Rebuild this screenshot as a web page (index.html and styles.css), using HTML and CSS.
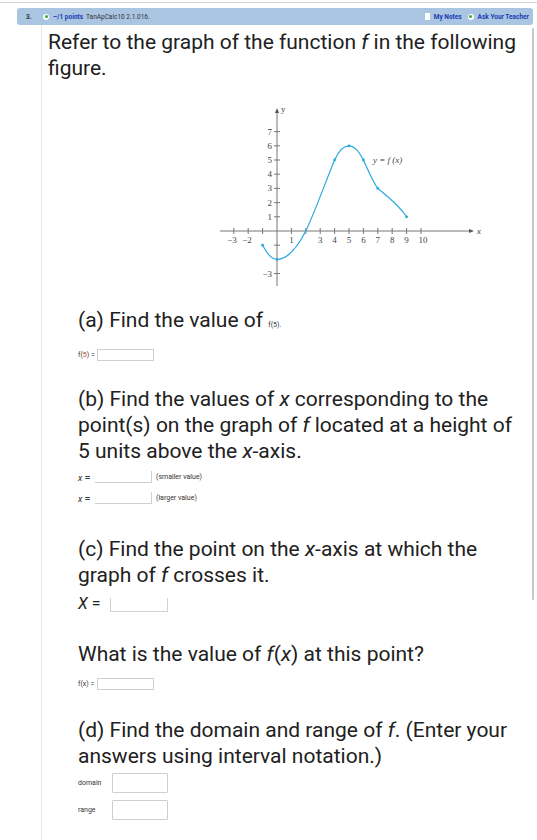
FILE: index.html
```html
<!DOCTYPE html>
<html>
<head>
<meta charset="utf-8">
<link rel="stylesheet" href="styles.css">
</head>
<body>
<div class="page">
  <div class="topline"></div>
  <div class="header">
    <div class="hleft">
      <span class="qnum">3.</span>
      <span class="dot"><span></span></span>
      <span class="pts">–/1 points</span>
      <span class="code">TanApCalc10 2.1.016.</span>
    </div>
    <div class="hright">
      <span class="note"></span>
      <span class="link">My Notes</span>
      <span class="dot"><span></span></span>
      <span class="link">Ask Your Teacher</span>
    </div>
  </div>
  <div class="content">
    <p class="big q">Refer to the graph of the function <i>f</i> in the following figure.</p>
    <svg class="graph" width="270" height="190" viewBox="0 0 270 190">
      <g stroke="#777" stroke-width="1" fill="none">
        <line x1="5" y1="131" x2="254" y2="131"/>
        <line x1="62" y1="186" x2="62" y2="12"/>
        <g>
          <line x1="18.8" y1="128" x2="18.8" y2="134"/>
          <line x1="33.2" y1="128" x2="33.2" y2="134"/>
          <line x1="47.6" y1="128" x2="47.6" y2="134"/>
          <line x1="76.4" y1="128" x2="76.4" y2="134"/>
          <line x1="90.8" y1="128" x2="90.8" y2="134"/>
          <line x1="105.2" y1="128" x2="105.2" y2="134"/>
          <line x1="119.6" y1="128" x2="119.6" y2="134"/>
          <line x1="134" y1="128" x2="134" y2="134"/>
          <line x1="148.4" y1="128" x2="148.4" y2="134"/>
          <line x1="162.8" y1="128" x2="162.8" y2="134"/>
          <line x1="177.2" y1="128" x2="177.2" y2="134"/>
          <line x1="191.6" y1="128" x2="191.6" y2="134"/>
          <line x1="206" y1="128" x2="206" y2="134"/>
        </g>
        <g>
          <line x1="59" y1="116.8" x2="65" y2="116.8"/>
          <line x1="59" y1="102.6" x2="65" y2="102.6"/>
          <line x1="59" y1="88.4" x2="65" y2="88.4"/>
          <line x1="59" y1="74.2" x2="65" y2="74.2"/>
          <line x1="59" y1="60" x2="65" y2="60"/>
          <line x1="59" y1="45.8" x2="65" y2="45.8"/>
          <line x1="59" y1="31.6" x2="65" y2="31.6"/>
          <line x1="59" y1="145.2" x2="65" y2="145.2"/>
          <line x1="59" y1="173.6" x2="65" y2="173.6"/>
        </g>
      </g>
      <polygon points="254,129 259,131 254,133" fill="#555"/>
      <polygon points="60,13 62,8 64,13" fill="#555"/>
      <g class="lbl" font-size="9" fill="#444" font-family="Liberation Serif, serif">
        <text x="262" y="134" font-style="italic">x</text>
        <text x="66" y="12" >y</text>
        <g text-anchor="middle">
          <text x="17" y="143">−3</text>
          <text x="32" y="143">−2</text>
          <text x="76.4" y="143">1</text>
          <text x="105.2" y="143">3</text>
          <text x="119.6" y="143">4</text>
          <text x="134" y="143">5</text>
          <text x="148.4" y="143">6</text>
          <text x="162.8" y="143">7</text>
          <text x="177.2" y="143">8</text>
          <text x="191.6" y="143">9</text>
          <text x="208" y="143">10</text>
        </g>
        <g text-anchor="end">
          <text x="57" y="35">7</text>
          <text x="57" y="49">6</text>
          <text x="57" y="63">5</text>
          <text x="57" y="77">4</text>
          <text x="57" y="91">3</text>
          <text x="57" y="106">2</text>
          <text x="57" y="120">1</text>
          <text x="57" y="177">−3</text>
        </g>
        <text x="158" y="63" font-style="italic">y = f (x)</text>
      </g>
      <path d="M47.6,145.2 C52,153 56,159.4 62,159.4 C72,159.4 82,148 90.8,131 C100,112 112,78 119.6,60 C124,50 128,45.8 134,45.8 C140,45.8 144,52 148.4,60 C153,70 158,82 162.8,88.4 C172,96 184,105 191.6,116.8" fill="none" stroke="#2aa9de" stroke-width="1.2"/>
      <g fill="#2aa9de">
        <circle cx="47.6" cy="145.2" r="1.4"/>
        <circle cx="62" cy="159.4" r="1.4"/>
        <circle cx="119.6" cy="60" r="1.4"/>
        <circle cx="134" cy="45.8" r="1.4"/>
        <circle cx="148.4" cy="60" r="1.4"/>
        <circle cx="162.8" cy="88.4" r="1.4"/>
        <circle cx="191.6" cy="116.8" r="1.4"/>
      </g>
    </svg>

    <div class="part">
      <p class="big pa">(a) Find the value of <span class="tiny">f(5).</span></p>
      <div class="row r-a"><span class="tiny lab">f(<span class="red">5</span>) =</span><span class="box b-full"></span></div>

      <p class="big pb">(b) Find the values of <i>x</i> corresponding to the point(s) on the graph of <i>f</i> located at a height of 5 units above the <i>x</i>-axis.</p>
      <div class="row r-x1"><span class="xeq"><i>x</i> <b>=</b></span><span class="box b-ul"></span><span class="tiny hint">(smaller value)</span></div>
      <div class="row r-x2"><span class="xeq"><i>x</i> <b>=</b></span><span class="box b-ul"></span><span class="tiny hint">(larger value)</span></div>

      <p class="big pc">(c) Find the point on the <i>x</i>-axis at which the graph of <i>f</i> crosses it.</p>
      <div class="row r-X"><span class="Xeq"><i>X</i> =</span><span class="box b-open"></span></div>

      <p class="big pw">What is the value of <i>f</i>(<i>x</i>) at this point?</p>
      <div class="row r-f"><span class="tiny lab">f(x) =</span><span class="box b-full"></span></div>

      <p class="big pd">(d) Find the domain and range of <i>f</i>. (Enter your answers using interval notation.)</p>
      <div class="row r-dom"><span class="tiny dl">domain</span><span class="box b-big"></span></div>
      <div class="row r-ran"><span class="tiny dl">range</span><span class="box b-big"></span></div>
    </div>
  </div>
  <div class="edge"></div>
</div>
</body>
</html>
```

FILE: styles.css
```css
html, body {
  margin: 0;
  padding: 0;
  background: #fff;
}
body {
  font-family: Roboto, "Noto Sans", sans-serif;
  color: #212121;
  width: 537px;
  height: 840px;
  overflow: hidden;
}
.page {
  position: relative;
  height: 840px;
}
.topline {
  height: 2px;
  border-bottom: 1px solid #d4d4d4;
}
.header {
  margin: 5px 4px 0 17px;
  height: 17px;
  background: #a9c5e2;
  border-radius: 3px;
  display: flex;
  align-items: center;
  justify-content: space-between;
  font-size: 6.5px;
  padding: 0 4px 0 9px;
}
.hleft, .hright {
  display: flex;
  align-items: center;
}
.qnum {
  font-weight: bold;
  color: #333;
  width: 17px;
}
.dot {
  width: 6px;
  height: 6px;
  border-radius: 50%;
  background: #fff;
  display: inline-flex;
  align-items: center;
  justify-content: center;
  margin-right: 4px;
}
.dot span {
  width: 3px;
  height: 3px;
  border-radius: 50%;
  background: #3aa53a;
}
.pts {
  font-weight: bold;
  color: #1b3db3;
  margin-right: 3px;
}
.code {
  color: #333;
}
.note {
  width: 5px;
  height: 7px;
  background: #fff;
  margin-right: 4px;
}
.link {
  font-weight: bold;
  color: #1b3db3;
  margin-right: 6px;
}
.link:last-child {
  margin-right: 0;
}
.content {
  margin-left: 41px;
  border-left: 1px solid #e6e6e6;
  padding-left: 6px;
  height: 815px;
}
.big {
  font-size: 21px;
  line-height: 26px;
  margin: 0;
  color: #212121;
}
.q {
  padding-top: 4px;
  width: 480px;
}
.graph {
  display: block;
  margin: 19px 0 0 167px;
}
.part {
  padding-left: 30px;
}
.pa { margin-top: 17px; }
.tiny {
  font-size: 7px;
  color: #333;
}
.red { color: #c0392b; }
.row {
  display: flex;
  align-items: center;
  height: 14px;
}
.lab { width: 19px; }
.box {
  display: block;
  box-sizing: border-box;
}
.b-full {
  width: 57px;
  height: 12px;
  border: 1px solid #cfcfcf;
}
.r-a { margin-top: 10px; }
.pb { margin-top: 24px; width: 437px; }
.r-x1 { margin-top: 6px; }
.r-x2 { margin-top: 7px; }
.xeq {
  width: 17px;
  font-size: 9px;
  color: #333;
}
.xeq b { font-weight: normal; font-size: 11px; }
.b-ul {
  width: 57px;
  height: 12px;
  border-bottom: 1px solid #cfcfcf;
  border-right: 1px solid #cfcfcf;
}
.hint { margin-left: 4px; }
.pc { margin-top: 31px; width: 437px; }
.r-X { margin-top: 2px; height: 26px; }
.Xeq {
  font-size: 16px;
  width: 32px;
  color: #222;
}
.b-open {
  width: 58px;
  height: 14px;
  margin-top: 4px;
  border: 1px solid #d2d2d2;
  border-top: none;
}
.pw { margin-top: 25px; }
.r-f { margin-top: 10px; }
.pd { margin-top: 26px; width: 437px; }
.r-dom { margin-top: 4px; height: 20px; }
.r-ran { margin-top: 7px; height: 20px; }
.dl { width: 34px; }
.b-big {
  width: 56px;
  height: 20px;
  border: 1px solid #cfcfcf;
  border-radius: 1px;
}
.edge {
  position: absolute;
  left: 532px;
  top: 28px;
  width: 2px;
  height: 572px;
  background: #c8c8c8;
  border-radius: 0 0 2px 2px;
}
```
